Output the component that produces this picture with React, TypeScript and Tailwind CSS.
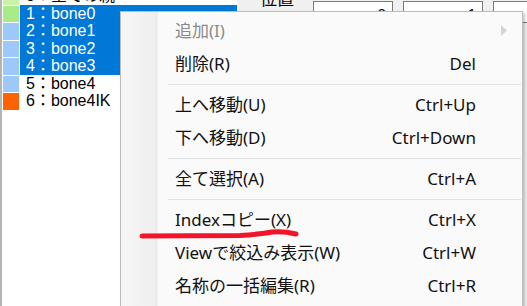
const bones = [
  { label: "0：全ての親", swatch: "bg-[#c6f5a8]", selected: false },
  { label: "1：bone0", swatch: "bg-[#a8ec8a]", selected: true },
  { label: "2：bone1", swatch: "bg-[#9cc8fa]", selected: true },
  { label: "3：bone2", swatch: "bg-[#9cc8fa]", selected: true },
  { label: "4：bone3", swatch: "bg-[#9cc8fa]", selected: true },
  { label: "5：bone4", swatch: "bg-[#9cc8fa]", selected: false },
  { label: "6：bone4IK", swatch: "bg-[#ff6200]", selected: false },
];

type Entry =
  | { kind: "item"; label: string; shortcut?: string; disabled?: boolean; submenu?: boolean }
  | { kind: "sep" };

const menu: Entry[] = [
  { kind: "item", label: "追加(I)", disabled: true, submenu: true },
  { kind: "item", label: "削除(R)", shortcut: "Del" },
  { kind: "sep" },
  { kind: "item", label: "上へ移動(U)", shortcut: "Ctrl+Up" },
  { kind: "item", label: "下へ移動(D)", shortcut: "Ctrl+Down" },
  { kind: "sep" },
  { kind: "item", label: "全て選択(A)", shortcut: "Ctrl+A" },
  { kind: "sep" },
  { kind: "item", label: "Indexコピー(X)", shortcut: "Ctrl+X" },
  { kind: "item", label: "Viewで絞込み表示(W)", shortcut: "Ctrl+W" },
  { kind: "item", label: "名称の一括編集(R)", shortcut: "Ctrl+R" },
];

function BoneList() {
  return (
    <div className="w-[237px] h-full shrink-0 bg-white border-l-2 border-[#b4b4b4] overflow-hidden font-['Liberation_Sans','Noto_Sans_CJK_JP',sans-serif] text-[16px]">
      <div className="-mt-[12.5px]">
        {bones.map((b) => (
          <div key={b.label} className="flex h-[17.5px] items-stretch">
            <div className={`w-[16px] ml-[1px] my-[0.5px] ${b.swatch}`}></div>
            <div
              className={`flex-1 ml-[1px] pl-[6px] flex items-center leading-none ${
                b.selected ? "bg-[#0078d7] text-white" : "text-black"
              }`}
            >
              {b.label}
            </div>
          </div>
        ))}
      </div>
    </div>
  );
}

function PositionBar() {
  return (
    <div className="flex-1 flex items-start overflow-hidden font-['Noto_Sans','Noto_Sans_CJK_JP',sans-serif]">
      <span className="shrink-0 ml-[23px] -mt-[13px] text-[17px] text-black leading-[24px] whitespace-nowrap">位置</span>
      <div className="shrink-0 ml-[19px] mt-[1px] w-[80px] h-[22px] bg-white border border-[#7a7a7a] text-right pr-[6px] pt-[2px] text-[15px] leading-[18px]">0</div>
      <div className="shrink-0 ml-[10px] mt-[1px] w-[80px] h-[22px] bg-white border border-[#7a7a7a] text-right pr-[6px] pt-[2px] text-[15px] leading-[18px]">1</div>
      <div className="shrink-0 ml-[10px] mt-[1px] w-[80px] h-[22px] bg-white border border-[#7a7a7a]"></div>
    </div>
  );
}

function ContextMenu() {
  return (
    <div className="absolute left-[120px] top-[11px] w-[403px] h-[310px] border border-[#bdbdbd] shadow-[2px_2px_3px_rgba(0,0,0,0.22)] pt-[2px] font-['Noto_Sans','Noto_Sans_CJK_JP',sans-serif] text-[17px] bg-[linear-gradient(to_right,#f6f6f6_0px,#efefef_34px,#e9e9e9_36px,#fafafa_37px,#fafafa_100%)]">
      {menu.map((m, i) =>
        m.kind === "sep" ? (
          <div key={i} className="h-[8px] flex items-center ml-[47px] mr-[1px]">
            <div className="h-px w-full bg-[#e3e3e3]"></div>
          </div>
        ) : (
          <div key={i} className="h-[33px] flex items-center pl-[54px]">
            <span className={`flex-1 ${m.disabled ? "text-[#8a8a8a]" : "text-[#111]"}`}>{m.label}</span>
            <span className="text-[#111]">{m.shortcut}</span>
            <span className="w-[46px] flex items-center pl-[25px]">
              {m.submenu && (
                <svg width="7" height="11" viewBox="0 0 7 11">
                  <path d="M0 0 L6 5.5 L0 11 Z" fill="#d4d4d4" />
                </svg>
              )}
            </span>
          </div>
        )
      )}
    </div>
  );
}

export default function App() {
  return (
    <div className="relative w-[527px] h-[306px] overflow-hidden bg-[#f0f0f0] flex">
      <BoneList />
      <PositionBar />
      <ContextMenu />
      <svg className="absolute inset-0 pointer-events-none" width="527" height="306" viewBox="0 0 527 306">
        <path
          d="M142 236 L240 235.5 Q262 234 272 232 Q284 231 296 234"
          fill="none"
          stroke="#f2152a"
          strokeWidth="5"
          strokeLinecap="round"
          strokeLinejoin="round"
        />
      </svg>
    </div>
  );
}
